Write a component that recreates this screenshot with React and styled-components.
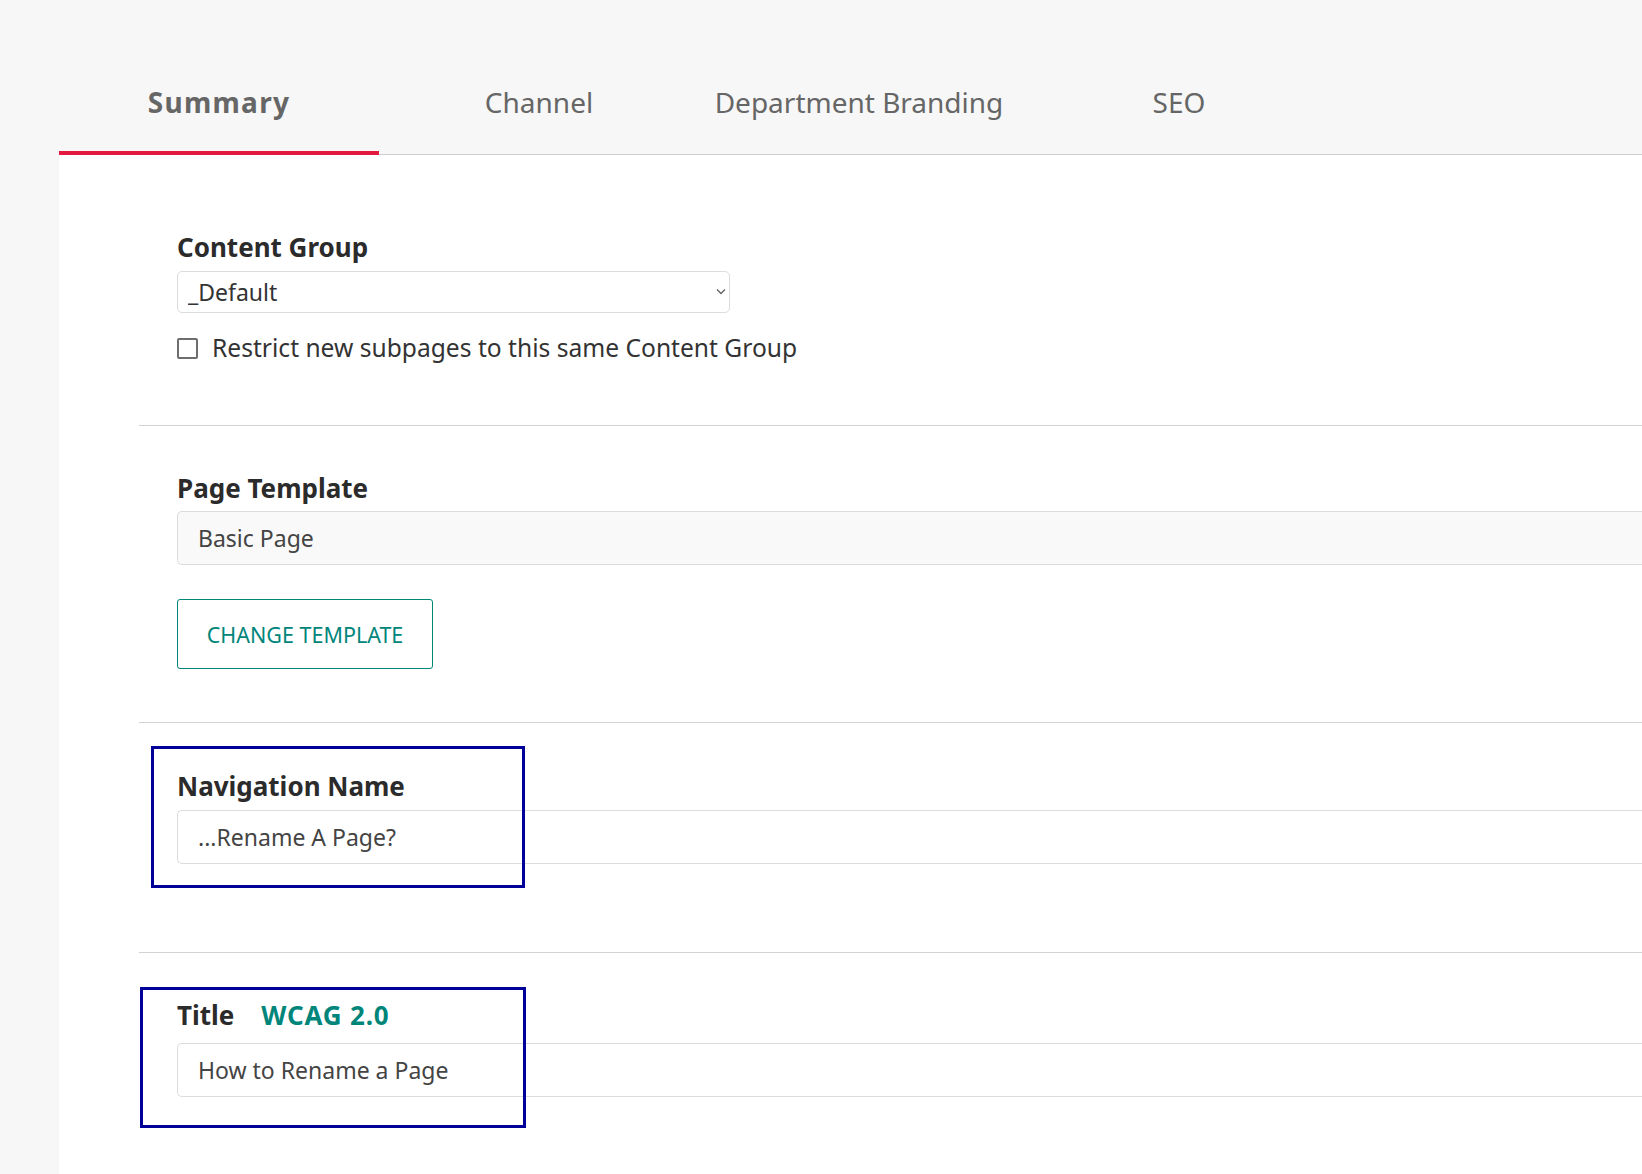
import React from "react";
import styled, { createGlobalStyle } from "styled-components";

const GlobalStyle = createGlobalStyle`
  html, body {
    margin: 0;
    padding: 0;
    overflow: hidden;
    background: #f7f7f7;
  }
  * {
    box-sizing: border-box;
  }
`;

const Page = styled.div`
  width: 1760px;
  min-height: 1174px;
  padding-left: 59px;
  background: #f7f7f7;
  font-family: "Noto Sans", "Open Sans", sans-serif;
`;

const TabBar = styled.nav`
  display: flex;
  height: 155px;
  border-bottom: 1px solid #cfcfcf;
`;

const Tab = styled.a`
  display: flex;
  justify-content: center;
  width: 320px;
  height: 155px;
  margin-bottom: -1px;
  padding-top: 80px;
  font-size: 28px;
  line-height: 44px;
  color: #666;
  font-weight: ${(props) => (props.active ? 700 : 400)};
  letter-spacing: ${(props) => (props.active ? "1.3px" : "0")};
  border-bottom: 4px solid ${(props) => (props.active ? "#e4173e" : "transparent")};
  text-decoration: none;
  cursor: pointer;
`;

const Panel = styled.main`
  background: #fff;
  padding-left: 80px;
  min-height: 1020px;
`;

const Section = styled.section`
  position: relative;
  padding: ${(props) => props.pad};
  padding-left: 38px;
  border-bottom: ${(props) => (props.last ? "none" : "1px solid #d2d2d2")};
`;

const Label = styled.label`
  display: flex;
  align-items: baseline;
  gap: 27px;
  font-size: 26px;
  line-height: 32px;
  font-weight: 700;
  color: #2b2b2b;
`;

const Wcag = styled.span`
  color: #00857b;
  letter-spacing: 0.8px;
`;

const SelectWrap = styled.div`
  position: relative;
  width: 553px;
  margin-top: 8px;
`;

const Select = styled.select`
  display: block;
  width: 100%;
  height: 42px;
  padding: 0 10px;
  font-family: inherit;
  font-size: 23px;
  color: #333;
  background: #fff;
  border: 1px solid #dcdcdc;
  border-radius: 5px;
  appearance: none;
  outline: none;
`;

const Chevron = styled.svg`
  position: absolute;
  right: 4px;
  top: 17px;
  width: 10px;
  height: 7px;
  pointer-events: none;
`;

const CheckRow = styled.label`
  display: flex;
  align-items: center;
  gap: 14px;
  margin-top: 19px;
  font-size: 24.6px;
  line-height: 32px;
  color: #333;
`;

const Checkbox = styled.input`
  appearance: none;
  width: 21px;
  height: 21px;
  margin: 0;
  border: 2px solid #6e6e6e;
  border-radius: 2px;
  background: #fff;
`;

const TextInput = styled.input`
  display: block;
  width: 100%;
  height: 54px;
  margin-top: ${(props) => props.gap || "7px"};
  padding: 0 20px;
  font-family: inherit;
  font-size: 23px;
  color: #444;
  background: ${(props) => (props.readOnly ? "#f9f9f9" : "#fff")};
  border: 1px solid #dcdcdc;
  border-right: none;
  border-radius: 5px 0 0 5px;
  outline: none;
`;

const OutlineButton = styled.button`
  display: block;
  width: 256px;
  height: 70px;
  margin-top: 34px;
  font-family: inherit;
  font-size: 21.5px;
  color: #00857b;
  background: #fff;
  border: 1px solid #00857b;
  border-radius: 3px;
  text-transform: uppercase;
  cursor: pointer;
`;

const Highlight = styled.div`
  position: absolute;
  left: ${(props) => props.x}px;
  top: ${(props) => props.y}px;
  width: ${(props) => props.w}px;
  height: ${(props) => props.h}px;
  border: 3px solid #000099;
  pointer-events: none;
`;

const tabs = ["Summary", "Channel", "Department Branding", "SEO"];

export default function App() {
  return (
    <Page>
      <GlobalStyle />
      <TabBar>
        {tabs.map((t, i) => (
          <Tab key={t} active={i === 0}>
            {t}
          </Tab>
        ))}
      </TabBar>
      <Panel>
        <Section pad="76px 0 61px">
          <Label>Content Group</Label>
          <SelectWrap>
            <Select defaultValue="_Default">
              <option>_Default</option>
            </Select>
            <Chevron viewBox="0 0 10 7">
              <path d="M1 1.5l4 4 4-4" fill="none" stroke="#666" strokeWidth="1.4" />
            </Chevron>
          </SelectWrap>
          <CheckRow>
            <Checkbox type="checkbox" />
            Restrict new subpages to this same Content Group
          </CheckRow>
        </Section>
        <Section pad="46px 0 53px">
          <Label>Page Template</Label>
          <TextInput readOnly value="Basic Page" />
          <OutlineButton>Change Template</OutlineButton>
        </Section>
        <Section pad="47px 0 88px">
          <Label>Navigation Name</Label>
          <TextInput defaultValue="...Rename A Page?" gap="8px" />
          <Highlight x={12} y={23} w={374} h={142} />
        </Section>
        <Section pad="46px 0 60px" last>
          <Label>
            Title <Wcag>WCAG 2.0</Wcag>
          </Label>
          <TextInput defaultValue="How to Rename a Page" gap="12px" />
          <Highlight x={1} y={34} w={386} h={141} />
        </Section>
      </Panel>
    </Page>
  );
}
